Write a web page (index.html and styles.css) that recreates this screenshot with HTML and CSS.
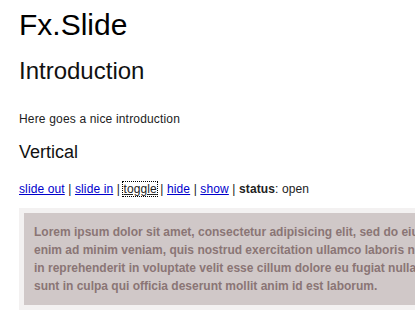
FILE: index.html
```html
<!DOCTYPE html>
<html lang="en">
<head>
  <meta charset="UTF-8" />
  <title>Fx.Slide</title>
  <link rel="stylesheet" href="styles.css">
</head>
<body>

  <h1>Fx.Slide</h1>

  <h2>Introduction</h2>
  <p class="intro">Here goes a nice introduction</p>

  <!-- Vertical slide demo -->
  <h3>Vertical</h3>
  <p class="controls">
    <a href="#" id="v_slideout">slide out</a> |
    <a href="#" id="v_slidein">slide in</a> |
    <a href="#" id="v_toggle" class="focused">toggle</a> |
    <a href="#" id="v_hide">hide</a> |
    <a href="#" id="v_show">show</a> |
    <strong>status</strong>: <span id="vertical_status">open</span>
  </p>

  <div id="vertical_slide" class="slide">
    Lorem ipsum dolor sit amet, consectetur adipisicing elit, sed do eiusmod tempor incididunt ut labore et dolore magna aliqua. Ut<br>
    enim ad minim veniam, quis nostrud exercitation ullamco laboris nisi ut aliquip ex ea commodo consequat. Duis aute irure dolor<br>
    in reprehenderit in voluptate velit esse cillum dolore eu fugiat nulla pariatur. Excepteur sint occaecat cupidatat non proident,<br>
    sunt in culpa qui officia deserunt mollit anim id est laborum.
  </div>

</body>
</html>
```
FILE: styles.css
```css
html {
  overflow: hidden;
}

body {
  margin: 0;
  padding: 0 19px;
  font-family: "Liberation Sans", Arial, sans-serif;
  font-size: 12px;
  color: #222;
  background: #fff;
}

h1 {
  font-size: 30px;
  line-height: 34px;
  font-weight: normal;
  color: #000;
  margin: 8px 0 15px;
}

h2 {
  font-size: 24px;
  line-height: 28px;
  font-weight: normal;
  color: #111;
  margin: 0 0 27px;
}

h3 {
  font-size: 18px;
  line-height: 21px;
  font-weight: normal;
  color: #111;
  margin: 0 0 19px;
}

p {
  line-height: 14px;
}

.intro {
  margin: 0 0 16px;
  letter-spacing: 0.17px;
}

.controls {
  margin: 0 0 12px;
  letter-spacing: 0.12px;
}

a {
  color: #0000cc;
}

a.focused {
  color: #222;
  outline: 1px dotted #000;
}

.slide {
  width: 760px;
  background: #d0c8c8;
  color: #8a7575;
  padding: 10px;
  border: 5px solid #f3f1f1;
  font-weight: bold;
  line-height: 18px;
  white-space: nowrap;
}
```
